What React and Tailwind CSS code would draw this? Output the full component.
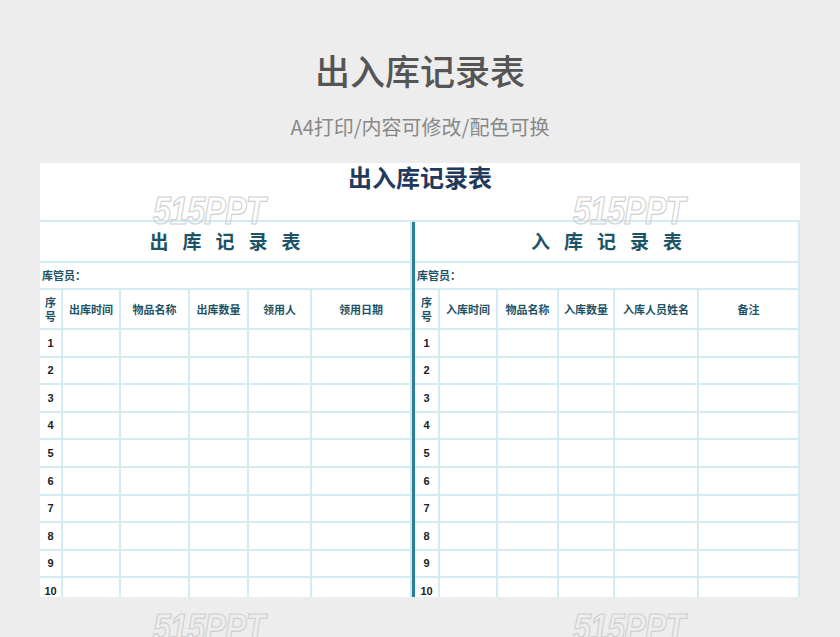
const F = { fontFamily: '"Noto Sans CJK SC","Noto Sans",sans-serif' };
const B = "border-r-2 border-b-2 border-[#d3ebf3]";

function Half({ title, cols, widths, divider }) {
  const tmpl = widths.map((w) => w + "px").join(" ");
  return (
    <div className={`flex flex-col ${divider ? "border-l-[3px] border-[#2b7f99]" : ""}`}>
      <div className={`h-[41px] flex items-center justify-center text-[19px] font-bold text-[#1d5366] tracking-[14px] pl-[14px] ${B}`}>{title}</div>
      <div className={`h-[27px] flex items-center pl-[2px] text-[11px] font-bold text-[#1d5366] ${B}`}>库管员：</div>
      <div className="grid" style={{ gridTemplateColumns: tmpl }}>
        {cols.map((c, i) => (
          <div key={c} className={`h-[40px] flex items-center justify-center text-center text-[11px] font-bold text-[#1d5366] leading-[14px] ${B}`}>
            {i === 0 ? <span>序<br />号</span> : c}
          </div>
        ))}
        {Array.from({ length: 10 }).map((_, r) =>
          cols.map((c, i) => (
            <div key={r + c} className={`h-[27.6px] flex items-center justify-center text-[11px] font-bold text-[#222] ${B}`} style={{ fontFamily: '"Liberation Sans",sans-serif' }}>
              {i === 0 ? r + 1 : ""}
            </div>
          ))
        )}
      </div>
    </div>
  );
}

function WM({ className }) {
  return (
    <div className={`absolute italic font-bold text-[38px] leading-[40px] text-transparent [-webkit-text-stroke:1.2px_#cfcfcf] scale-x-[0.85] origin-left ${className}`} style={{ fontFamily: '"Liberation Sans",sans-serif', letterSpacing: "-1px" }}>515PPT</div>
  );
}

export default function App() {
  return (
    <div className="w-[840px] h-[637px] bg-[#ededed] relative overflow-hidden" style={F}>
      <div className="h-[108px] pt-[48px] text-center text-[35px] font-medium text-[#555] leading-[44px]">出入库记录表</div>
      <div className="h-[55px] text-center text-[20px] text-[#888] pt-[4px]">A4打印/内容可修改/配色可换</div>
      <div className="mx-[40px] bg-white h-[434px] overflow-hidden">
        <div className="h-[59px] text-center text-[24px] font-bold text-[#1f3a5c] leading-[28px] border-b-2 border-[#d3ebf3]">出入库记录表</div>
        <div className="flex">
          <Half title="出库记录表" cols={["序号", "出库时间", "物品名称", "出库数量", "领用人", "领用日期"]} widths={[23, 58, 69, 59, 63, 100]} />
          <Half divider title="入库记录表" cols={["序号", "入库时间", "物品名称", "入库数量", "入库人员姓名", "备注"]} widths={[25, 58, 61, 56, 84, 101]} />
        </div>
      </div>
      <WM className="left-[153px] top-[191px]" />
      <WM className="left-[573px] top-[191px]" />
      <WM className="left-[153px] top-[608px]" />
      <WM className="left-[573px] top-[608px]" />
    </div>
  );
}
